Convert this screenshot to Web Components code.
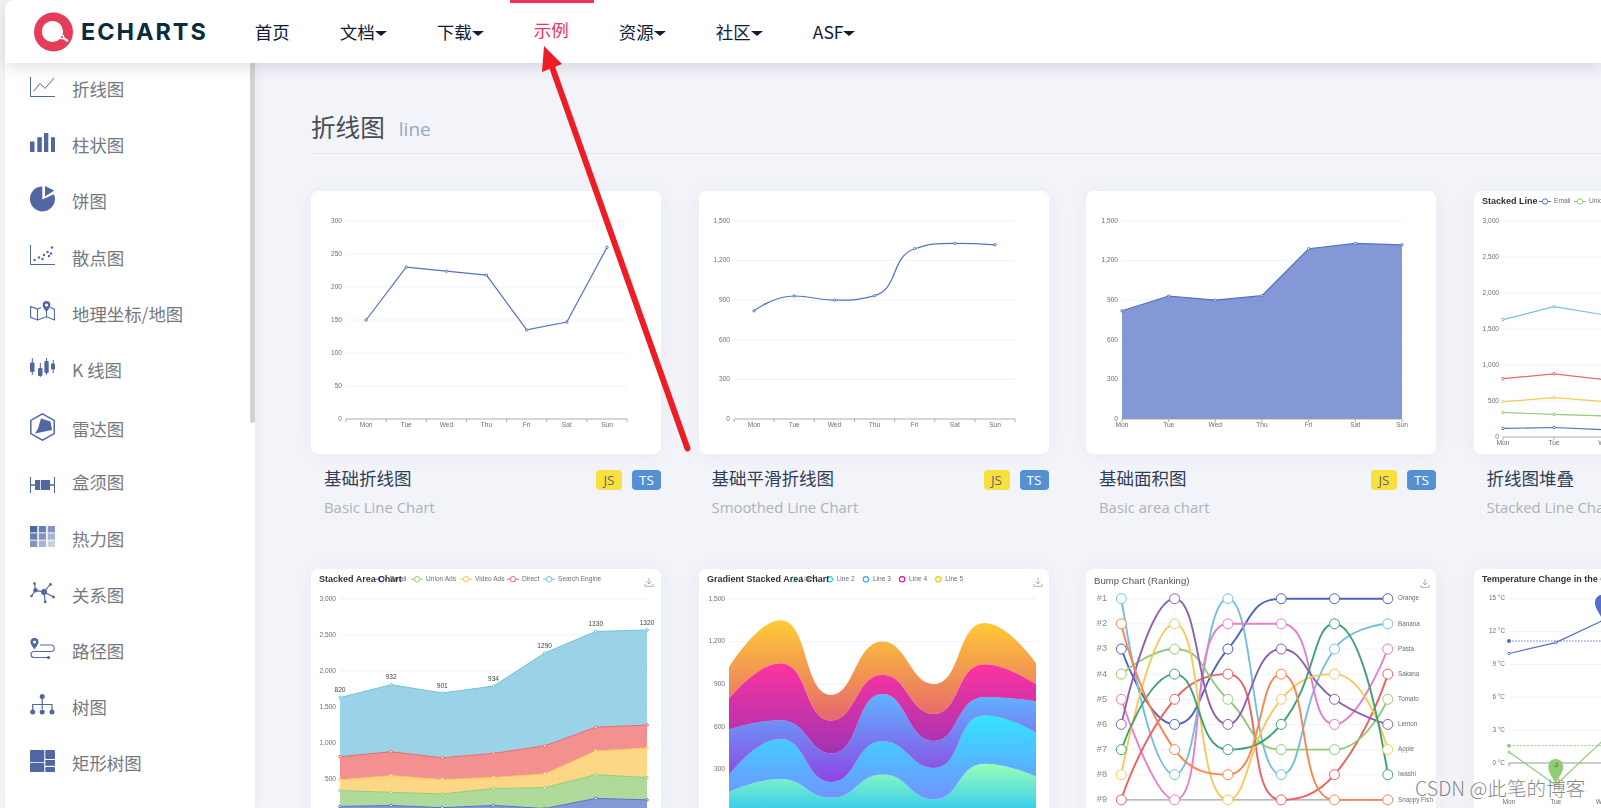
<!DOCTYPE html>
<html lang="zh">
<head>
<meta charset="utf-8">
<title>Examples - Apache ECharts</title>
<style>
  html, body { margin: 0; height: 100%; overflow: hidden; background: #f6f6f6; }
</style>
</head>
<body>
<ec-app>
  <ec-header slot="header">
    <ec-nav-item>首页</ec-nav-item>
    <ec-nav-item caret>文档</ec-nav-item>
    <ec-nav-item caret>下载</ec-nav-item>
    <ec-nav-item active>示例</ec-nav-item>
    <ec-nav-item caret>资源</ec-nav-item>
    <ec-nav-item caret>社区</ec-nav-item>
    <ec-nav-item caret>ASF</ec-nav-item>
  </ec-header>

  <ec-sidebar slot="sidebar">
    <ec-side-item icon="line">折线图</ec-side-item>
    <ec-side-item icon="bar">柱状图</ec-side-item>
    <ec-side-item icon="pie">饼图</ec-side-item>
    <ec-side-item icon="scatter">散点图</ec-side-item>
    <ec-side-item icon="map">地理坐标/地图</ec-side-item>
    <ec-side-item icon="candle">K 线图</ec-side-item>
    <ec-side-item icon="radar" nudge>雷达图</ec-side-item>
    <ec-side-item icon="box" low>盒须图</ec-side-item>
    <ec-side-item icon="heat">热力图</ec-side-item>
    <ec-side-item icon="graph">关系图</ec-side-item>
    <ec-side-item icon="route">路径图</ec-side-item>
    <ec-side-item icon="tree">树图</ec-side-item>
    <ec-side-item icon="treemap">矩形树图</ec-side-item>
  </ec-sidebar>

  <ec-section-title slot="main" sub="line">折线图</ec-section-title>
  <ec-gallery slot="main">
    <ec-card>
      <ec-chart slot="chart" kind="basic"></ec-chart>
      <span slot="title">基础折线图</span><span slot="sub">Basic Line Chart</span>
    </ec-card>
    <ec-card>
      <ec-chart slot="chart" kind="smooth"></ec-chart>
      <span slot="title">基础平滑折线图</span><span slot="sub">Smoothed Line Chart</span>
    </ec-card>
    <ec-card>
      <ec-chart slot="chart" kind="area"></ec-chart>
      <span slot="title">基础面积图</span><span slot="sub">Basic area chart</span>
    </ec-card>
    <ec-card>
      <ec-chart slot="chart" kind="stackedLine"></ec-chart>
      <span slot="title">折线图堆叠</span><span slot="sub">Stacked Line Chart</span>
    </ec-card>
    <ec-card bare><ec-chart slot="chart" kind="stackedArea"></ec-chart></ec-card>
    <ec-card bare><ec-chart slot="chart" kind="gradient"></ec-chart></ec-card>
    <ec-card bare><ec-chart slot="chart" kind="bump"></ec-chart></ec-card>
    <ec-card bare><ec-chart slot="chart" kind="temperature"></ec-chart></ec-card>
  </ec-gallery>

  <ec-arrow slot="overlay"></ec-arrow>
  <ec-watermark slot="overlay">CSDN @此笔的博客</ec-watermark>
</ec-app>

<script>
const CJK = '"Noto Sans CJK SC", "Noto Sans", sans-serif';
const LATIN = '"Open Sans", "Noto Sans CJK SC", sans-serif';
const CHART_FONT = '"Liberation Sans", Arial, sans-serif';

class EcApp extends HTMLElement {
  constructor() {
    super();
    this.attachShadow({ mode: 'open' }).innerHTML = `
      <style>
        :host {
          display: grid;
          position: relative;
          grid-template-columns: 250px 1fr;
          grid-template-rows: 63px 1fr;
          height: 808px;
          padding-left: 5px;
          box-sizing: border-box;
          overflow: hidden;
          font-family: ${CJK};
        }
        .head { grid-column: 1 / 3; position: relative; z-index: 3; min-width: 0; }
        .side { position: relative; z-index: 2; min-height: 0; }
        .main { background: #f2f4f9; padding: 45px 0 0 56px; min-width: 0; overflow: hidden; }
      </style>
      <div class="head"><slot name="header"></slot></div>
      <div class="side"><slot name="sidebar"></slot></div>
      <div class="main"><slot name="main"></slot></div>
      <slot name="overlay"></slot>`;
  }
}

class EcHeader extends HTMLElement {
  constructor() {
    super();
    this.attachShadow({ mode: 'open' }).innerHTML = `
      <style>
        :host {
          display: flex;
          align-items: center;
          height: 63px;
          padding-left: 29px;
          background: #fff;
          border-top-left-radius: 9px;
          box-shadow: 0 2px 18px rgba(20, 25, 45, .16);
        }
        .logo { display: flex; align-items: center; gap: 7px; margin-right: 47px; }
        .word {
          font: 700 23.4px Inter, "Liberation Sans", sans-serif;
          color: #0a2c3d;
          letter-spacing: 2px;
          line-height: 1;
          margin-top: 1px;
        }
        nav { display: flex; align-items: center; gap: 50px; height: 100%; }
      </style>
      <div class="logo">
        <svg width="40" height="40" viewBox="0 0 40 40">
          <circle cx="19.5" cy="20" r="19.5" fill="#e43c59"/>
          <circle cx="18.5" cy="19.5" r="10.6" fill="#fff"/>
          <path d="M26 24l8 5" stroke="#fff" stroke-width="2.2" fill="none"/>
          <circle cx="28" cy="25" r="2.4" fill="#fff"/>
          <circle cx="28" cy="25" r="1" fill="#e43c59"/>
        </svg>
        <span class="word">ECHARTS</span>
      </div>
      <nav><slot></slot></nav>`;
  }
}

class EcNavItem extends HTMLElement {
  constructor() {
    super();
    this.attachShadow({ mode: 'open' }).innerHTML = `
      <style>
        :host {
          display: flex;
          align-items: center;
          position: relative;
          height: 100%;
          font-size: 17.5px;
          color: #111a36;
          box-sizing: border-box;
        }
        :host([active]) { color: #f0325f; padding-bottom: 4px; }
        .caret { display: none; width: 0; height: 0; margin-top: 4px;
          border: 6px solid transparent; border-top: 5px solid #111a36; border-bottom: 0; }
        :host([caret]) .caret { display: block; }
        .bar { display: none; position: absolute; left: -24px; right: -25px; top: 0; height: 3px; background: #f0325f; }
        :host([active]) .bar { display: block; }
      </style>
      <slot></slot><span class="caret"></span><span class="bar"></span>`;
  }
}

class EcSidebar extends HTMLElement {
  constructor() {
    super();
    this.attachShadow({ mode: 'open' }).innerHTML = `
      <style>
        :host {
          display: block;
          position: relative;
          height: 100%;
          background: #fff;
          box-shadow: 0 0 12px rgba(40, 50, 80, .06);
          overflow: hidden;
        }
        .list { margin-top: -2.5px; }
        .thumb { position: absolute; right: 0; top: 0; width: 5px; height: 360px; background: #d3d3d4; border-radius: 0 0 3px 3px; }
      </style>
      <div class="list"><slot></slot></div><div class="thumb"></div>`;
  }
}

// icons are drawn 25px wide, coordinates taken straight from the screenshot
const SIDE_ICONS = {
  line: [20, `<path d="M.5 0V19.5H25" fill="none" stroke-width="1"/><path d="M3.5 14.5L10 6.5 15 11.5 24 1" fill="none" stroke-width="1"/>`],
  bar: [19, `<g stroke="none"><rect y="8.5" width="4.5" height="10.5"/><rect x="7.3" y="4.2" width="4.5" height="14.8"/><rect x="14" width="4.3" height="19"/><rect x="21" y="4.2" width="4" height="14.8"/></g>`],
  pie: [26, `<g stroke="none"><path d="M12.3.4V13.4L24 8.2A12.5 12.5 0 1 1 12.3.4Z"/><path d="M15 0L24.3 4.5 15 10.5Z"/></g>`],
  scatter: [20, `<path d="M.5 0V19.5H25" fill="none" stroke-width="1"/><g stroke="none"><circle cx="4.5" cy="15" r="1.2"/><circle cx="9" cy="12.5" r="1.2"/><circle cx="12.5" cy="14" r="1.2"/><circle cx="14" cy="10" r="1.2"/><circle cx="17.5" cy="7" r="1.2"/><circle cx="19" cy="11" r="1.2"/><circle cx="21" cy="8.5" r="1.2"/><circle cx="22" cy="2.5" r="1.2"/></g>`],
  map: [20, `<path d="M.6 5.5L7.5 8.2 7.5 19 .6 16.3ZM7.5 8.2L11 6.6M7.5 19L16.5 15.8 24.4 19V8.2L20 6.5M16.5 15.8V10" fill="none" stroke-width="1.1"/><path d="M16.5 0A4 4 0 0 1 20.4 4C20.4 6.5 17.5 9.5 16.5 11 15.5 9.5 12.6 6.5 12.6 4A4 4 0 0 1 16.5 0Z" stroke="none"/><circle cx="16.5" cy="4" r="1.5" fill="#fff" stroke="none"/>`],
  candle: [19, `<g stroke="none"><rect x="1.8" y="0" width="1" height="17"/><rect y="4.5" width="4.5" height="9.5" rx="1"/><rect x="9.8" y="5" width="1" height="14"/><rect x="8" y="10" width="4.5" height="8" rx="1"/><rect x="16" y="0" width="1" height="17"/><rect x="14.4" y="3" width="4.3" height="12" rx="1"/><rect x="22.7" y="2" width="1" height="13"/><rect x="21" y="5.5" width="4" height="6" rx="1"/></g>`],
  radar: [28, `<path d="M12.5 .8L24.2 7.4V20.6L12.5 27.2.8 20.6V7.4Z" fill="none" stroke-width="1.5"/><path d="M11 5.5L20.5 8.5 22 17 5 20.5 8 15.5Z" stroke="none"/>`],
  box: [16, `<path d="M.5 0V16M24.5 0V16" fill="none" stroke-width="1"/><path d="M.5 8H5M20 8H24.5" fill="none" stroke-width="1.4"/><rect x="5" y="3" width="5" height="10" stroke="none"/><rect x="10.8" y="3" width="9.2" height="10" stroke="none"/>`],
  heat: [21, `<g stroke="none"><rect width="7.3" height="6.4"/><rect x="8.8" width="7.3" height="6.4" opacity=".85"/><rect x="17.7" width="7.3" height="6.4" opacity=".7"/><rect y="7.3" width="7.3" height="6.4" opacity=".85"/><rect x="8.8" y="7.3" width="7.3" height="6.4" opacity=".7"/><rect x="17.7" y="7.3" width="7.3" height="6.4" opacity=".5"/><rect y="14.6" width="7.3" height="6.4" opacity=".7"/><rect x="8.8" y="14.6" width="7.3" height="6.4" opacity=".5"/><rect x="17.7" y="14.6" width="7.3" height="6.4" opacity=".3"/></g>`],
  graph: [21, `<path d="M4.5 0.8L5.5 8.3 1.5 14M5.5 8.3L14 10 20 2.5M14 10L23.5 15M14 10L15.2 20" fill="none" stroke-width="1.2"/><g stroke="none"><circle cx="14" cy="10" r="3"/><circle cx="5.5" cy="8.3" r="2.3"/><circle cx="4.5" cy="1.5" r="1.3"/><circle cx="1.5" cy="14" r="1.3"/><circle cx="20.5" cy="2.5" r="1.4"/><circle cx="23.5" cy="15" r="1.4"/><circle cx="15.2" cy="20" r="1.4"/></g>`],
  route: [21, `<path d="M4.5 0A4 4 0 0 1 8.5 4C8.5 6.5 5.5 9.5 4.5 11.5 3.5 9.5.5 6.5.5 4A4 4 0 0 1 4.5 0Z" stroke="none"/><circle cx="4.5" cy="4" r="1.5" fill="#fff" stroke="none"/><path d="M10 7H21A3 3 0 0 1 21 13.5H4A3 3 0 0 0 4 19.5H18" fill="none" stroke-width="1.1"/><circle cx="18.5" cy="19.5" r="1.6" stroke="none"/>`],
  tree: [21, `<path d="M12.2 2V15M2.7 18V10.5H22V18" fill="none" stroke-width="1.2"/><g stroke="none"><circle cx="12.2" cy="2.6" r="2.5"/><circle cx="2.7" cy="18" r="2.5"/><circle cx="12.2" cy="18" r="2.5"/><circle cx="22" cy="18" r="2.5"/></g>`],
  treemap: [22, `<g stroke="none"><rect width="14.3" height="12.2" rx="1"/><rect y="13" width="14.3" height="9" rx="1"/><rect x="15.3" width="9.7" height="9" rx="1"/><rect x="15.3" y="10" width="9.7" height="5.8" /><rect x="15.3" y="17" width="9.7" height="5" rx="1"/></g>`]
};

class EcSideItem extends HTMLElement {
  constructor() {
    super();
    this.attachShadow({ mode: 'open' });
  }
  connectedCallback() {
    const [h, body] = SIDE_ICONS[this.getAttribute('icon')];
    this.shadowRoot.innerHTML = `
      <style>
        :host {
          display: flex;
          align-items: center;
          gap: 17px;
          height: 56.2px;
          padding-left: 25px;
          box-sizing: border-box;
          font-size: 17.4px;
          color: #75787f;
        }
        :host([nudge]) { padding-top: 6px; }
        svg { flex: none; margin-bottom: 4px; fill: #5067a2; stroke: #5067a2; }
        :host([low]) svg { margin-bottom: 0; margin-top: 7px; }
      </style>
      <svg width="25" height="${h}" viewBox="0 0 25 ${h}">${body}</svg><slot></slot>`;
  }
}

class EcSectionTitle extends HTMLElement {
  constructor() {
    super();
    this.attachShadow({ mode: 'open' });
  }
  connectedCallback() {
    this.shadowRoot.innerHTML = `
      <style>
        :host {
          display: flex;
          align-items: center;
          gap: 14px;
          height: 36px;
          padding-bottom: 9px;
          border-bottom: 1px solid #e1e4ee;
          margin-bottom: 37px;
          font-size: 24.6px;
          color: #4a4d55;
        }
        span { font: 19px ${LATIN}; color: #9da6bd; margin-top: 6px; }
      </style>
      <slot></slot><span>${this.getAttribute('sub')}</span>`;
  }
}

class EcGallery extends HTMLElement {
  constructor() {
    super();
    this.attachShadow({ mode: 'open' }).innerHTML = `
      <style>
        :host {
          display: grid;
          grid-template-columns: repeat(4, 350px);
          column-gap: 37.5px;
          grid-auto-rows: 378px;
        }
      </style>
      <slot></slot>`;
  }
}

class EcCard extends HTMLElement {
  constructor() {
    super();
    this.attachShadow({ mode: 'open' });
  }
  connectedCallback() {
    const info = this.hasAttribute('bare') ? '' : `
      <div class="row">
        <div class="name"><slot name="title"></slot></div>
        <ec-badge>JS</ec-badge><ec-badge ts>TS</ec-badge>
      </div>
      <div class="sub"><slot name="sub"></slot></div>`;
    this.shadowRoot.innerHTML = `
      <style>
        :host { display: block; min-width: 0; }
        .thumb {
          height: 263px;
          background: #fff;
          border-radius: 7px;
          overflow: hidden;
          box-shadow: 0 0 22px rgba(40, 50, 90, .05);
        }
        .row { display: flex; align-items: center; gap: 10px; height: 40px; padding: 4px 0 0 13px; }
        .name { flex: 1; font-size: 17.5px; color: #2f3e57; margin-bottom: 2px; }
        ec-badge { margin-top: 4px; }
        .sub { height: 18px; padding-left: 13px; font: 14.9px/18px ${LATIN}; color: #aeb1b8; white-space: nowrap; }
      </style>
      <div class="thumb"><slot name="chart"></slot></div>${info}`;
  }
}

class EcBadge extends HTMLElement {
  constructor() {
    super();
    this.attachShadow({ mode: 'open' }).innerHTML = `
      <style>
        :host {
          display: flex;
          align-items: center;
          justify-content: center;
          width: 26px;
          height: 20px;
          border-radius: 4px;
          background: #f8e13f;
          color: #666;
          font: 13.5px ${LATIN};
        }
        :host([ts]) { width: 29px; background: #5591d2; color: #fff; }
      </style>
      <slot></slot>`;
  }
}

/* --- chart drawing helpers, everything in 350x263 thumbnail coordinates --- */
const COLORS = { blue: '#5470c6', green: '#91cc75', yellow: '#fac858', red: '#ee6666', cyan: '#73c0de' };
const DAYS = ['Mon', 'Tue', 'Wed', 'Thu', 'Fri', 'Sat', 'Sun'];

function label(x, y, s, size = 6.6, anchor = 'middle', fill = '#6b6e75', weight = 400) {
  return `<text x="${x}" y="${y}" font-size="${size}" text-anchor="${anchor}" fill="${fill}" font-weight="${weight}" dominant-baseline="middle">${s}</text>`;
}
function title(s, bold = true) {
  return bold ? label(8, 11, s, 9, 'start', '#333', 700) : label(8, 12, s, 9.6, 'start', '#555');
}
function splitLines(x0, x1, ys, labels, fmtX) {
  return ys.map((y, i) => `<path d="M${x0} ${y}H${x1}" stroke="#edeff4" stroke-width=".8"/>` +
    label(fmtX || x0 - 4, y, labels[i], 6.6, 'end')).join('');
}
function xAxis(x0, x1, y, centers, ticks, labelY) {
  const t = ticks.map(x => `M${x} ${y}v3`).join('');
  return `<path d="M${x0} ${y}H${x1}${t}" stroke="#9a9a9a" stroke-width=".8" fill="none"/>` +
    centers.map((x, i) => label(x, labelY || y + 6.5, DAYS[i])).join('');
}
function dots(pts, color, r = 1.4) {
  return pts.map(p => `<circle cx="${p[0]}" cy="${p[1]}" r="${r}" fill="#fff" stroke="${color}" stroke-width="1"/>`).join('');
}
function straight(pts) {
  return 'M' + pts.map(p => p.join(' ')).join('L');
}
// same idea as echarts' smooth line: tangent from neighbours, control points clamped
function controlPoints(pts, s = 0.5) {
  const out = [];
  const clamp = (v, a, b) => Math.max(Math.min(a, b), Math.min(Math.max(a, b), v));
  for (let i = 0; i < pts.length; i++) {
    const p = pts[i], prev = pts[i - 1], next = pts[i + 1];
    if (!prev || !next) { out.push({ a: p, b: p }); continue; }
    let vx = (next[0] - prev[0]) * s, vy = (next[1] - prev[1]) * s;
    const l0 = Math.hypot(p[0] - prev[0], p[1] - prev[1]) || 1;
    const l1 = Math.hypot(next[0] - p[0], next[1] - p[1]) || 1;
    const r1 = l1 / (l0 + l1);
    const nx = clamp(p[0] + vx * r1, p[0], next[0]), ny = clamp(p[1] + vy * r1, p[1], next[1]);
    const ux = nx - p[0], uy = ny - p[1];
    const px = clamp(p[0] - ux * l0 / l1, p[0], prev[0]), py = clamp(p[1] - uy * l0 / l1, p[1], prev[1]);
    const wx = p[0] - px, wy = p[1] - py;
    out.push({ a: [px, py], b: [p[0] + wx * l1 / l0, p[1] + wy * l1 / l0] });
  }
  return out;
}
function smooth(pts, s = 0.5, move = true) {
  const cp = controlPoints(pts, s);
  let d = (move ? 'M' : 'L') + pts[0].join(' ');
  for (let i = 1; i < pts.length; i++) {
    d += `C${cp[i - 1].b[0].toFixed(2)} ${cp[i - 1].b[1].toFixed(2)} ${cp[i].a[0].toFixed(2)} ${cp[i].a[1].toFixed(2)} ${pts[i][0]} ${pts[i][1]}`;
  }
  return d;
}
function legend(x, y, color, text, plain) {
  const icon = plain
    ? `<circle cx="${x + 6}" cy="${y}" r="2.6" fill="#fff" stroke="${color}" stroke-width="1.1"/>`
    : `<path d="M${x} ${y}h12" stroke="${color}" stroke-width="1"/><circle cx="${x + 6}" cy="${y}" r="2.7" fill="#fff" stroke="${color}" stroke-width="1"/>`;
  return icon + label(x + 15, y, text, 6.6, 'start');
}
function download(cx, cy) {
  return `<path d="M${cx} ${cy - 4}V${cy + 2}M${cx - 2.5} ${cy - .5}L${cx} ${cy + 2}L${cx + 2.5} ${cy - .5}M${cx - 4} ${cy + 2}v2.4h8v-2.4" fill="none" stroke="#a0a0a0" stroke-width=".8"/>`;
}
function stack(series) {
  const totals = series[0].map(() => 0);
  return series.map(s => s.map((v, i) => (totals[i] += v)));
}

const SEARCH = [820, 932, 901, 934, 1290, 1330, 1320];
const STACK_SERIES = [
  [120, 132, 101, 134, 90, 230, 210],
  [220, 182, 191, 234, 290, 330, 310],
  [150, 232, 201, 154, 190, 330, 410],
  [320, 332, 301, 334, 390, 330, 320],
  SEARCH
];
const STACK_COLORS = [COLORS.blue, COLORS.green, COLORS.yellow, COLORS.red, COLORS.cyan];

const DRAW = {
  basic() {
    const x0 = 35, step = 40.15, base = 228, u = 198 / 300;
    const ys = [300, 250, 200, 150, 100, 50, 0];
    const centers = DAYS.map((_, i) => +(x0 + step * (i + .5)).toFixed(1));
    const pts = [150, 230, 224, 218, 135, 147, 260].map((v, i) => [centers[i], +(base - v * u).toFixed(1)]);
    return splitLines(x0, 316, ys.slice(0, 6).map(v => base - v * u), ys) + label(31, base, '0', 6.6, 'end') +
      xAxis(x0, 316, base, centers, DAYS.map((_, i) => x0 + step * i).concat(316)) +
      `<path d="${straight(pts)}" fill="none" stroke="${COLORS.blue}" stroke-width="1.2"/>` + dots(pts, COLORS.blue, 1.2);
  },
  smooth() {
    const x0 = 35, step = 40.15, base = 228, u = 198 / 1500;
    const ys = [1500, 1200, 900, 600, 300];
    const centers = DAYS.map((_, i) => +(x0 + step * (i + .5)).toFixed(1));
    const pts = SEARCH.map((v, i) => [centers[i], +(base - v * u).toFixed(1)]);
    return splitLines(x0, 316, ys.map(v => base - v * u), ys.map(v => v.toLocaleString('en-US'))) + label(31, base, '0', 6.6, 'end') +
      xAxis(x0, 316, base, centers, DAYS.map((_, i) => x0 + step * i).concat(316)) +
      `<path d="${smooth(pts)}" fill="none" stroke="${COLORS.blue}" stroke-width="1.2"/>` + dots(pts, COLORS.blue, 1.2);
  },
  area() {
    const x0 = 36, x1 = 316, base = 228, u = 198 / 1500, step = (x1 - x0) / 6;
    const ys = [1500, 1200, 900, 600, 300];
    const xs = DAYS.map((_, i) => +(x0 + step * i).toFixed(1));
    const pts = SEARCH.map((v, i) => [xs[i], +(base - v * u).toFixed(1)]);
    return splitLines(x0, x1, ys.map(v => base - v * u), ys.map(v => v.toLocaleString('en-US'))) + label(32, base, '0', 6.6, 'end') +
      `<path d="${straight(pts)}L${x1} ${base}L${x0} ${base}Z" fill="${COLORS.blue}" fill-opacity=".72"/>` +
      xAxis(x0, x1, base, xs, xs) +
      `<path d="${straight(pts)}" fill="none" stroke="${COLORS.blue}" stroke-width="1.2"/>` + dots(pts, COLORS.blue, 1.2);
  },
  stackedLine() {
    const x0 = 29, base = 246, u = 216 / 3000, step = 51;
    const xs = DAYS.map((_, i) => x0 + step * i);
    const ys = [3000, 2500, 2000, 1500, 1000, 500];
    let out = title('Stacked Line') + legend(65, 10.5, COLORS.blue, 'Email') + legend(100, 10.5, COLORS.green, 'Union Ads') +
      splitLines(x0, 335, ys.map(v => base - v * u), ys.map(v => v.toLocaleString('en-US'))) + label(25, base, '0', 6.6, 'end') +
      xAxis(x0, 335, base, xs, xs);
    const cols = [COLORS.blue, COLORS.green, COLORS.yellow, COLORS.red, COLORS.cyan];
    // read off the thumbnail: five lines, cumulative totals
    const lines = [
      [120, 132, 101, 134, 90, 230, 210],
      [340, 314, 292, 368, 380, 560, 520],
      [490, 546, 493, 522, 570, 890, 930],
      [810, 878, 794, 856, 960, 1220, 1250],
      [1630, 1810, 1695, 1790, 2250, 2550, 2570]
    ];
    lines.forEach((l, k) => {
      const pts = l.map((v, i) => [xs[i], +(base - v * u).toFixed(1)]);
      out += `<path d="${straight(pts)}" fill="none" stroke="${cols[k]}" stroke-width="1.2"/>` + dots(pts, cols[k], 1.3);
    });
    return out;
  },
  stackedArea() {
    const x0 = 29, x1 = 336, base = 246, u = 216 / 3000, step = (x1 - x0) / 6;
    const xs = DAYS.map((_, i) => +(x0 + step * i).toFixed(1));
    const ys = [3000, 2500, 2000, 1500, 1000, 500];
    const totals = stack(STACK_SERIES);
    let out = splitLines(x0, x1, ys.map(v => base - v * u), ys.map(v => v.toLocaleString('en-US')));
    let lower = xs.map(x => [x, base]);
    totals.forEach((t, k) => {
      const pts = t.map((v, i) => [xs[i], +(base - v * u).toFixed(1)]);
      const poly = pts.concat(lower.slice().reverse());
      out += `<path d="${straight(poly)}Z" fill="${STACK_COLORS[k]}" fill-opacity=".72"/>`;
      lower = pts;
    });
    totals.forEach((t, k) => {
      const pts = t.map((v, i) => [xs[i], +(base - v * u).toFixed(1)]);
      out += `<path d="${straight(pts)}" fill="none" stroke="${STACK_COLORS[k]}" stroke-width="1"/>` + dots(pts, STACK_COLORS[k], 1.3);
    });
    lower.forEach((p, i) => { out += label(p[0], p[1] - 7, SEARCH[i], 6.6, 'middle', '#444'); });
    return out +
      legend(64, 10.2, COLORS.blue, 'Email') + legend(100, 10.2, COLORS.green, 'Union Ads') +
      legend(149, 10.2, COLORS.yellow, 'Video Ads') + legend(196, 10.2, COLORS.red, 'Direct') +
      legend(232, 10.2, COLORS.cyan, 'Search Engine') +
      title('Stacked Area Chart') + download(338, 13);
  },
  gradient() {
    const x0 = 30, x1 = 337, base = 243, u = 213 / 1500, step = (x1 - x0) / 6;
    const xs = DAYS.map((_, i) => +(x0 + step * i).toFixed(1));
    const ys = [1500, 1200, 900, 600, 300];
    const data = [
      [140, 232, 101, 264, 90, 340, 250],
      [120, 282, 111, 234, 220, 340, 310],
      [320, 132, 201, 334, 190, 130, 220],
      [220, 402, 231, 134, 190, 230, 120],
      [220, 302, 181, 234, 210, 290, 150]
    ];
    const grads = [
      ['rgb(128,255,165)', 'rgb(1,191,236)'],
      ['rgb(0,221,255)', 'rgb(77,119,255)'],
      ['rgb(55,162,255)', 'rgb(116,21,219)'],
      ['rgb(255,0,135)', 'rgb(135,0,157)'],
      ['rgb(255,191,0)', 'rgb(224,62,76)']
    ];
    const defs = grads.map((g, i) => `<linearGradient id="g${i}" x1="0" y1="0" x2="0" y2="1"><stop offset="0" stop-color="${g[0]}"/><stop offset="1" stop-color="${g[1]}"/></linearGradient>`).join('');
    let out = `<defs>${defs}</defs>` + splitLines(x0, x1, ys.map(v => base - v * u), ys.map(v => v.toLocaleString('en-US')));
    let lowerPts = null;
    stack(data).forEach((t, k) => {
      const pts = t.map((v, i) => [xs[i], +(base - v * u).toFixed(1)]);
      const back = lowerPts
        ? smooth(lowerPts.slice().reverse(), .5, false)
        : `L${x1} ${base}L${x0} ${base}`;
      out += `<path d="${smooth(pts)}${back}Z" fill="url(#g${k})" fill-opacity=".8"/>`;
      lowerPts = pts;
    });
    ['#80ffa5', '#00ddff', '#37a2ff', '#ff0087', '#ffbf00'].forEach((c, i) => {
      const x = 88.5 + 36.2 * i;
      out += `<circle cx="${x + 6}" cy="10.3" r="2.7" fill="#fff" stroke="${c}" stroke-width="1.1"/>` +
        label(x + 13, 10, 'Line ' + (i + 1), 6.6, 'start');
    });
    return out + title('Gradient Stacked Area Chart') + download(339, 13);
  },
  bump() {
    const xs = [35.3, 88.6, 141.9, 195.2, 248.5, 301.8];
    const rank = r => 29.7 + 25.15 * (r - 1);
    const series = [
      ['Orange', '#4e63bf', [3, 6, 3, 1, 1, 1]],
      ['Banana', '#73c0de', [1, 8, 1, 8, 3, 2]],
      ['Pasta', '#ea7ccc', [5, 9, 2, 2, 6, 3]],
      ['Sakana', '#ee5f5f', [9, 5, 4, 9, 8, 4]],
      ['Tomato', '#91cc75', [4, 3, 5, 7, 7, 5]],
      ['Lemon', '#8e5fb0', [6, 1, 6, 3, 5, 6]],
      ['Apple', '#fac858', [8, 2, 9, 5, 4, 7]],
      ['Iwashi', '#3ba272', [7, 4, 7, 6, 2, 8]],
      ['Snappy Fish', '#fc8452', [2, 7, 8, 4, 9, 9]]
    ];
    let out = title('Bump Chart (Ranking)', false) + download(339, 14);
    for (let r = 1; r <= 9; r++) {
      out += `<path d="M35.3 ${rank(r)}H301.8" stroke="${r === 9 ? '#8c8c8c' : '#edeff4'}" stroke-width="${r === 9 ? 1 : .8}"/>` +
        label(21, rank(r), '#' + r, 9.2, 'end', '#8a8a8a');
    }
    xs.forEach(x => { out += `<path d="M${x} 29.7V${rank(9)}" stroke="#f0f1f5" stroke-width=".8"/>`; });
    series.forEach(s => {
      const pts = s[2].map((r, i) => [xs[i], +rank(r).toFixed(1)]);
      out += `<path d="${smooth(pts)}" fill="none" stroke="${s[1]}" stroke-width="1.9"/>`;
    });
    series.forEach(s => {
      s[2].forEach((r, i) => {
        out += `<circle cx="${xs[i]}" cy="${rank(r).toFixed(1)}" r="5" fill="#fff" stroke="${s[1]}" stroke-width="1"/>`;
      });
      out += label(312, rank(s[2][5]), s[0], 6.3, 'start');
    });
    return out;
  },
  temperature() {
    const x0 = 35, step = 46.7, zero = 194, u = 10.95;
    const xs = DAYS.map((_, i) => +(x0 + step * i).toFixed(1));
    const y = v => +(zero - v * u).toFixed(1);
    let out = title('Temperature Change in the Coming Week');
    [15, 12, 9, 6, 3].forEach(v => {
      out += `<path d="M${x0} ${y(v)}H340" stroke="#edeff4" stroke-width=".8"/>` + label(31, y(v), v + ' °C', 6.4, 'end');
    });
    out += label(31, zero, '0 °C', 6.4, 'end') +
      `<path d="M${x0} ${zero}H340M${x0} ${zero}v3" stroke="#8c8c8c" stroke-width=".9"/>`;
    const hi = [10, 11, 13, 11, 12, 12, 9].map((v, i) => [xs[i], y(v)]);
    const lo = [1, -2, 2, 5, 3, 2, 0].map((v, i) => [xs[i], y(v)]);
    out += `<path d="M${x0} 72H340" stroke="${COLORS.blue}" stroke-width=".9" stroke-dasharray="1.6 1.4"/><circle cx="${x0}" cy="72" r="2" fill="${COLORS.blue}"/>`;
    out += `<path d="M${x0} 176.7H340" stroke="${COLORS.green}" stroke-width=".9" stroke-dasharray="2.2 1.4"/><circle cx="${x0}" cy="176.7" r="2" fill="${COLORS.green}"/>`;
    out += `<path d="${straight(hi)}" fill="none" stroke="${COLORS.blue}" stroke-width="1.2"/>` + dots(hi, COLORS.blue, 1.2);
    out += `<path d="${straight(lo)}" fill="none" stroke="${COLORS.green}" stroke-width="1.2"/>` + dots(lo, COLORS.green, 1.2);
    const pin = (cx, tip, color) => `<path d="M${cx} ${tip}C${cx - 1.5} ${tip - 7} ${cx - 7.5} ${tip - 11} ${cx - 7.5} ${tip - 18.5}A7.5 7.5 0 1 1 ${cx + 7.5} ${tip - 18.5}C${cx + 7.5} ${tip - 11} ${cx + 1.5} ${tip - 7} ${cx} ${tip}Z" fill="${color}"/>`;
    out += pin(xs[1], lo[1][1], COLORS.green) + label(xs[1], lo[1][1] - 19, '-2', 6, 'middle', '#3f5f33');
    out += pin(xs[2], hi[2][1], COLORS.blue);
    out += DAYS.slice(0, 3).map((d, i) => label(xs[i], 233, d)).join('');
    return out;
  }
};

class EcChart extends HTMLElement {
  constructor() {
    super();
    this.attachShadow({ mode: 'open' });
  }
  connectedCallback() {
    this.shadowRoot.innerHTML = `
      <style>
        :host { display: block; height: 263px; }
        svg { display: block; font-family: ${CHART_FONT}; filter: blur(.2px); overflow: hidden; }
      </style>
      <svg width="350" height="263" viewBox="0 0 350 263">${DRAW[this.getAttribute('kind')]()}</svg>`;
  }
}

// the red arrow somebody scribbled on the screenshot
class EcArrow extends HTMLElement {
  constructor() {
    super();
    this.attachShadow({ mode: 'open' }).innerHTML = `
      <style>
        :host { position: absolute; left: 0; top: 0; z-index: 5; pointer-events: none; }
        svg { display: block; }
      </style>
      <svg width="1601" height="808" viewBox="0 0 1601 808">
        <path d="M551 64L687.5 448.5" stroke="#ee1c25" stroke-width="6" stroke-linecap="round"/>
        <path d="M544 46L562 64 542 72Z" fill="#ee1c25"/>
      </svg>`;
  }
}

class EcWatermark extends HTMLElement {
  constructor() {
    super();
    this.attachShadow({ mode: 'open' }).innerHTML = `
      <style>
        :host {
          position: absolute;
          left: 1415px;
          top: 775px;
          z-index: 6;
          font: 300 19.6px/26px ${CJK};
          color: rgba(80, 80, 80, .7);
          white-space: nowrap;
          text-shadow: 0 0 2px rgba(255, 255, 255, .6);
        }
      </style>
      <slot></slot>`;
  }
}

customElements.define('ec-app', EcApp);
customElements.define('ec-header', EcHeader);
customElements.define('ec-nav-item', EcNavItem);
customElements.define('ec-sidebar', EcSidebar);
customElements.define('ec-side-item', EcSideItem);
customElements.define('ec-section-title', EcSectionTitle);
customElements.define('ec-gallery', EcGallery);
customElements.define('ec-card', EcCard);
customElements.define('ec-badge', EcBadge);
customElements.define('ec-chart', EcChart);
customElements.define('ec-arrow', EcArrow);
customElements.define('ec-watermark', EcWatermark);
</script>
</body>
</html>
